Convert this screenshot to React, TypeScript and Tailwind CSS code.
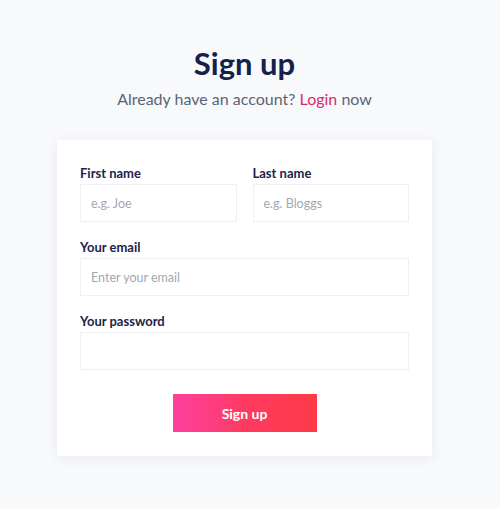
import React from "react";

const Field = ({ label, placeholder, type = "text" }: { label: string; placeholder?: string; type?: string }) => (
  <div className="flex flex-col">
    <label className="text-[13px] font-bold text-[#1b2448] leading-4 mb-[3px]">{label}</label>
    <input
      type={type}
      placeholder={placeholder}
      className="h-[38px] w-full border border-[#eef0f3] bg-white px-[10px] text-[12.5px] text-[#1b2448] placeholder-[#a3a8b0] outline-none"
    />
  </div>
);

export default function App() {
  return (
    <div className="min-h-[509px] w-full bg-[#f7f9fb] pt-[43px] pr-[11px]" style={{ fontFamily: "Lato, 'Open Sans', sans-serif" }}>
      <h1 className="text-center text-[31px] font-bold leading-[40px] text-[#14214a]">Sign up</h1>
      <p className="mt-[5px] text-center text-[16px] leading-[22px] text-[#5b6577]">
        Already have an account? <span className="text-[#d92a68]">Login</span> now
      </p>
      <div className="mx-auto mt-[30px] w-[375px] bg-white px-[23px] pt-[25px] pb-[24px] shadow-[0_2px_12px_rgba(30,50,90,0.07)]">
        <div className="grid grid-cols-2 gap-x-[16px]">
          <Field label="First name" placeholder="e.g. Joe" />
          <Field label="Last name" placeholder="e.g. Bloggs" />
        </div>
        <div className="mt-[17px]">
          <Field label="Your email" placeholder="Enter your email" type="email" />
        </div>
        <div className="mt-[17px]">
          <Field label="Your password" type="password" />
        </div>
        <div className="mt-[24px] flex justify-center">
          <button className="h-[38px] w-[144px] bg-gradient-to-r from-[#fd3f9d] via-[#fe3a62] to-[#fe3a46] text-[14px] font-bold text-white">
            Sign up
          </button>
        </div>
      </div>
    </div>
  );
}
